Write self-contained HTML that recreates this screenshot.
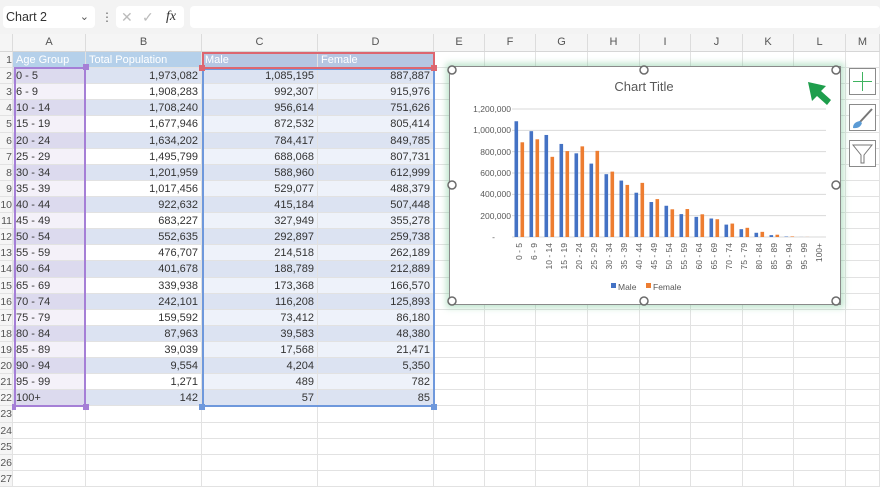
<!DOCTYPE html><html><head><style>
*{margin:0;padding:0;box-sizing:border-box}
body{width:880px;height:495px;overflow:hidden;background:#fff;font-family:"Liberation Sans",Arial,sans-serif;position:relative}
.top{position:absolute;left:0;top:0;width:880px;height:34px;background:#f3f3f3}
.box{position:absolute;background:#fff;border-radius:4px;height:22px;top:6px}
.hdr{position:absolute;top:34px;left:0;width:880px;height:18px;background:#f5f5f5;border-bottom:1px solid #d6d6d6}
.hdr div{position:absolute;top:0;height:17px;line-height:17px;text-align:center;font-size:11px;color:#555;border-right:1px solid #dcdcdc}
.rows{position:absolute;top:52px;left:0;width:880px}
.r{height:16.12px;display:flex;font-size:11px;line-height:16px;color:#333;border-bottom:1px solid #e2e2e2;position:relative}
.r>div{flex:none;border-right:1px solid #e2e2e2;overflow:hidden;white-space:nowrap;padding:0 3px}
.n{width:13px;background:#f5f5f5;color:#555;padding:0!important;text-align:right;font-size:10.5px}
.a{width:73px}.b{width:116px;text-align:right}.c{width:116px;text-align:right}.d{width:116px;text-align:right}
.e{width:51px}.f{width:51px}.g{width:52px}.h{width:52px}.i{width:51px}.j{width:52px}.k{width:51px}.l{width:52px}.m{width:34px}
.ev .a{background:#dcdaee}.ev .b,.ev .c,.ev .d{background:#dce3f2}
.od .a{background:#f4f1f9}.od .c,.od .d{background:#eef2fa}
.h1 .a,.h1 .b{background:#b5d0ea;color:#fff;font-weight:normal}.h1 .c,.h1 .d{background:#b6c6e2;color:#fff;text-align:left}
.ln{position:absolute}
</style></head><body>
<div class="top"></div>
<div class="box" style="left:3px;width:92px;font-size:12.5px;line-height:22px;color:#333;padding-left:3px">Chart 2<span style="position:absolute;right:6px;top:0;color:#555;font-size:11px">&#8964;</span></div>
<div style="position:absolute;left:101px;top:10px;color:#666;font-size:12px">&#8942;</div>
<div class="box" style="left:116px;width:68px;font-size:14px;line-height:22px;color:#bbb"><span style="position:absolute;left:5px">&#10005;</span><span style="position:absolute;left:26px">&#10003;</span><span style="position:absolute;left:50px;color:#333;font-family:'Liberation Serif',serif;font-style:italic">fx</span></div>
<div class="box" style="left:190px;width:690px"></div>
<div class="hdr">
<div style="left:0;width:13px"></div>
<div style="left:13px;width:73px">A</div><div style="left:86px;width:116px">B</div><div style="left:202px;width:116px">C</div><div style="left:318px;width:116px">D</div><div style="left:434px;width:51px">E</div><div style="left:485px;width:51px">F</div><div style="left:536px;width:52px">G</div><div style="left:588px;width:52px">H</div><div style="left:640px;width:51px">I</div><div style="left:691px;width:52px">J</div><div style="left:743px;width:51px">K</div><div style="left:794px;width:52px">L</div><div style="left:846px;width:34px">M</div>
</div>
<div class="rows">
<div class="r h1"><div class="n">1</div><div class="a">Age Group</div><div class="b" style="text-align:left">Total Population</div><div class="c">Male</div><div class="d">Female</div><div class="e"></div><div class="f"></div><div class="g"></div><div class="h"></div><div class="i"></div><div class="j"></div><div class="k"></div><div class="l"></div><div class="m"></div></div>
<div class="r ev"><div class="n">2</div><div class="a">0 - 5</div><div class="b">1,973,082</div><div class="c">1,085,195</div><div class="d">887,887</div><div class="e"></div><div class="f"></div><div class="g"></div><div class="h"></div><div class="i"></div><div class="j"></div><div class="k"></div><div class="l"></div><div class="m"></div></div>
<div class="r od"><div class="n">3</div><div class="a">6 - 9</div><div class="b">1,908,283</div><div class="c">992,307</div><div class="d">915,976</div><div class="e"></div><div class="f"></div><div class="g"></div><div class="h"></div><div class="i"></div><div class="j"></div><div class="k"></div><div class="l"></div><div class="m"></div></div>
<div class="r ev"><div class="n">4</div><div class="a">10 - 14</div><div class="b">1,708,240</div><div class="c">956,614</div><div class="d">751,626</div><div class="e"></div><div class="f"></div><div class="g"></div><div class="h"></div><div class="i"></div><div class="j"></div><div class="k"></div><div class="l"></div><div class="m"></div></div>
<div class="r od"><div class="n">5</div><div class="a">15 - 19</div><div class="b">1,677,946</div><div class="c">872,532</div><div class="d">805,414</div><div class="e"></div><div class="f"></div><div class="g"></div><div class="h"></div><div class="i"></div><div class="j"></div><div class="k"></div><div class="l"></div><div class="m"></div></div>
<div class="r ev"><div class="n">6</div><div class="a">20 - 24</div><div class="b">1,634,202</div><div class="c">784,417</div><div class="d">849,785</div><div class="e"></div><div class="f"></div><div class="g"></div><div class="h"></div><div class="i"></div><div class="j"></div><div class="k"></div><div class="l"></div><div class="m"></div></div>
<div class="r od"><div class="n">7</div><div class="a">25 - 29</div><div class="b">1,495,799</div><div class="c">688,068</div><div class="d">807,731</div><div class="e"></div><div class="f"></div><div class="g"></div><div class="h"></div><div class="i"></div><div class="j"></div><div class="k"></div><div class="l"></div><div class="m"></div></div>
<div class="r ev"><div class="n">8</div><div class="a">30 - 34</div><div class="b">1,201,959</div><div class="c">588,960</div><div class="d">612,999</div><div class="e"></div><div class="f"></div><div class="g"></div><div class="h"></div><div class="i"></div><div class="j"></div><div class="k"></div><div class="l"></div><div class="m"></div></div>
<div class="r od"><div class="n">9</div><div class="a">35 - 39</div><div class="b">1,017,456</div><div class="c">529,077</div><div class="d">488,379</div><div class="e"></div><div class="f"></div><div class="g"></div><div class="h"></div><div class="i"></div><div class="j"></div><div class="k"></div><div class="l"></div><div class="m"></div></div>
<div class="r ev"><div class="n">10</div><div class="a">40 - 44</div><div class="b">922,632</div><div class="c">415,184</div><div class="d">507,448</div><div class="e"></div><div class="f"></div><div class="g"></div><div class="h"></div><div class="i"></div><div class="j"></div><div class="k"></div><div class="l"></div><div class="m"></div></div>
<div class="r od"><div class="n">11</div><div class="a">45 - 49</div><div class="b">683,227</div><div class="c">327,949</div><div class="d">355,278</div><div class="e"></div><div class="f"></div><div class="g"></div><div class="h"></div><div class="i"></div><div class="j"></div><div class="k"></div><div class="l"></div><div class="m"></div></div>
<div class="r ev"><div class="n">12</div><div class="a">50 - 54</div><div class="b">552,635</div><div class="c">292,897</div><div class="d">259,738</div><div class="e"></div><div class="f"></div><div class="g"></div><div class="h"></div><div class="i"></div><div class="j"></div><div class="k"></div><div class="l"></div><div class="m"></div></div>
<div class="r od"><div class="n">13</div><div class="a">55 - 59</div><div class="b">476,707</div><div class="c">214,518</div><div class="d">262,189</div><div class="e"></div><div class="f"></div><div class="g"></div><div class="h"></div><div class="i"></div><div class="j"></div><div class="k"></div><div class="l"></div><div class="m"></div></div>
<div class="r ev"><div class="n">14</div><div class="a">60 - 64</div><div class="b">401,678</div><div class="c">188,789</div><div class="d">212,889</div><div class="e"></div><div class="f"></div><div class="g"></div><div class="h"></div><div class="i"></div><div class="j"></div><div class="k"></div><div class="l"></div><div class="m"></div></div>
<div class="r od"><div class="n">15</div><div class="a">65 - 69</div><div class="b">339,938</div><div class="c">173,368</div><div class="d">166,570</div><div class="e"></div><div class="f"></div><div class="g"></div><div class="h"></div><div class="i"></div><div class="j"></div><div class="k"></div><div class="l"></div><div class="m"></div></div>
<div class="r ev"><div class="n">16</div><div class="a">70 - 74</div><div class="b">242,101</div><div class="c">116,208</div><div class="d">125,893</div><div class="e"></div><div class="f"></div><div class="g"></div><div class="h"></div><div class="i"></div><div class="j"></div><div class="k"></div><div class="l"></div><div class="m"></div></div>
<div class="r od"><div class="n">17</div><div class="a">75 - 79</div><div class="b">159,592</div><div class="c">73,412</div><div class="d">86,180</div><div class="e"></div><div class="f"></div><div class="g"></div><div class="h"></div><div class="i"></div><div class="j"></div><div class="k"></div><div class="l"></div><div class="m"></div></div>
<div class="r ev"><div class="n">18</div><div class="a">80 - 84</div><div class="b">87,963</div><div class="c">39,583</div><div class="d">48,380</div><div class="e"></div><div class="f"></div><div class="g"></div><div class="h"></div><div class="i"></div><div class="j"></div><div class="k"></div><div class="l"></div><div class="m"></div></div>
<div class="r od"><div class="n">19</div><div class="a">85 - 89</div><div class="b">39,039</div><div class="c">17,568</div><div class="d">21,471</div><div class="e"></div><div class="f"></div><div class="g"></div><div class="h"></div><div class="i"></div><div class="j"></div><div class="k"></div><div class="l"></div><div class="m"></div></div>
<div class="r ev"><div class="n">20</div><div class="a">90 - 94</div><div class="b">9,554</div><div class="c">4,204</div><div class="d">5,350</div><div class="e"></div><div class="f"></div><div class="g"></div><div class="h"></div><div class="i"></div><div class="j"></div><div class="k"></div><div class="l"></div><div class="m"></div></div>
<div class="r od"><div class="n">21</div><div class="a">95 - 99</div><div class="b">1,271</div><div class="c">489</div><div class="d">782</div><div class="e"></div><div class="f"></div><div class="g"></div><div class="h"></div><div class="i"></div><div class="j"></div><div class="k"></div><div class="l"></div><div class="m"></div></div>
<div class="r ev"><div class="n">22</div><div class="a">100+</div><div class="b">142</div><div class="c">57</div><div class="d">85</div><div class="e"></div><div class="f"></div><div class="g"></div><div class="h"></div><div class="i"></div><div class="j"></div><div class="k"></div><div class="l"></div><div class="m"></div></div>
<div class="r"><div class="n">23</div><div class="a"></div><div class="b"></div><div class="c"></div><div class="d"></div><div class="e"></div><div class="f"></div><div class="g"></div><div class="h"></div><div class="i"></div><div class="j"></div><div class="k"></div><div class="l"></div><div class="m"></div></div>
<div class="r"><div class="n">24</div><div class="a"></div><div class="b"></div><div class="c"></div><div class="d"></div><div class="e"></div><div class="f"></div><div class="g"></div><div class="h"></div><div class="i"></div><div class="j"></div><div class="k"></div><div class="l"></div><div class="m"></div></div>
<div class="r"><div class="n">25</div><div class="a"></div><div class="b"></div><div class="c"></div><div class="d"></div><div class="e"></div><div class="f"></div><div class="g"></div><div class="h"></div><div class="i"></div><div class="j"></div><div class="k"></div><div class="l"></div><div class="m"></div></div>
<div class="r"><div class="n">26</div><div class="a"></div><div class="b"></div><div class="c"></div><div class="d"></div><div class="e"></div><div class="f"></div><div class="g"></div><div class="h"></div><div class="i"></div><div class="j"></div><div class="k"></div><div class="l"></div><div class="m"></div></div>
<div class="r"><div class="n">27</div><div class="a"></div><div class="b"></div><div class="c"></div><div class="d"></div><div class="e"></div><div class="f"></div><div class="g"></div><div class="h"></div><div class="i"></div><div class="j"></div><div class="k"></div><div class="l"></div><div class="m"></div></div>
</div>
<!-- selection outlines -->
<div class="ln" style="left:14px;top:67px;width:72px;height:340px;border:2px solid #a57fd6"></div>
<div class="ln" style="left:202px;top:68px;width:233px;height:339px;border:2px solid #6e98dc"></div>
<div class="ln" style="left:202px;top:52px;width:233px;height:17px;border:2px solid #dd6670"></div>
<div class="ln" style="left:83px;top:64px;width:6px;height:6px;background:#a57fd6"></div>
<div class="ln" style="left:83px;top:404px;width:6px;height:6px;background:#a57fd6"></div>
<div class="ln" style="left:12px;top:404px;width:4px;height:6px;background:#a57fd6"></div>
<div class="ln" style="left:199px;top:65px;width:6px;height:6px;background:#dd6670"></div>
<div class="ln" style="left:431px;top:65px;width:6px;height:6px;background:#dd6670"></div>
<div class="ln" style="left:199px;top:404px;width:6px;height:6px;background:#6e98dc"></div>
<div class="ln" style="left:431px;top:404px;width:6px;height:6px;background:#6e98dc"></div>
<!-- chart -->
<div class="ln" style="left:449px;top:66px;width:392px;height:239px;box-shadow:0 0 6px 3px rgba(120,200,150,.45);background:#fff;border:1px solid #8a8a8a"></div>
<svg class="ln" style="left:0;top:0" width="880" height="495" id="ch">
<g font-family="Liberation Sans,Arial,sans-serif" font-size="8.5" fill="#595959" text-anchor="end">
<text x="511" y="112">1,200,000</text><text x="511" y="133">1,000,000</text><text x="511" y="155">800,000</text><text x="511" y="176">600,000</text><text x="511" y="197">400,000</text><text x="511" y="219">200,000</text><text x="495" y="240">-</text>
</g>
<g stroke="#d9d9d9" stroke-width="1" id="grid"></g>
<text x="644" y="91" font-family="Liberation Sans,Arial,sans-serif" font-size="13" fill="#595959" text-anchor="middle">Chart Title</text>
<g id="bars"></g>
<g font-family="Liberation Sans,Arial,sans-serif" font-size="8.5" fill="#595959" text-anchor="end" id="cats">
<text transform="translate(522,243) rotate(-90)">0 - 5</text><text transform="translate(537,243) rotate(-90)">6 - 9</text><text transform="translate(552,243) rotate(-90)">10 - 14</text><text transform="translate(567,243) rotate(-90)">15 - 19</text><text transform="translate(582,243) rotate(-90)">20 - 24</text><text transform="translate(597,243) rotate(-90)">25 - 29</text><text transform="translate(612,243) rotate(-90)">30 - 34</text><text transform="translate(627,243) rotate(-90)">35 - 39</text><text transform="translate(642,243) rotate(-90)">40 - 44</text><text transform="translate(657,243) rotate(-90)">45 - 49</text><text transform="translate(672,243) rotate(-90)">50 - 54</text><text transform="translate(687,243) rotate(-90)">55 - 59</text><text transform="translate(702,243) rotate(-90)">60 - 64</text><text transform="translate(717,243) rotate(-90)">65 - 69</text><text transform="translate(732,243) rotate(-90)">70 - 74</text><text transform="translate(747,243) rotate(-90)">75 - 79</text><text transform="translate(762,243) rotate(-90)">80 - 84</text><text transform="translate(777,243) rotate(-90)">85 - 89</text><text transform="translate(792,243) rotate(-90)">90 - 94</text><text transform="translate(807,243) rotate(-90)">95 - 99</text><text transform="translate(822,243) rotate(-90)">100+</text>
</g>
<rect x="611" y="283" width="5" height="5" fill="#4472c4"/><text x="618" y="290" font-family="Liberation Sans,Arial,sans-serif" font-size="8.5" fill="#595959">Male</text>
<rect x="646" y="283" width="5" height="5" fill="#ed7d31"/><text x="653" y="290" font-family="Liberation Sans,Arial,sans-serif" font-size="8.5" fill="#595959">Female</text>
<g fill="#fff" stroke="#6b6b6b" stroke-width="1.5">
<circle cx="452" cy="70" r="4"/><circle cx="644" cy="70" r="4"/><circle cx="836" cy="70" r="4"/><circle cx="452" cy="185" r="4"/><circle cx="836" cy="185" r="4"/><circle cx="452" cy="301" r="4"/><circle cx="644" cy="301" r="4"/><circle cx="836" cy="301" r="4"/>
</g>
<path d="M808 82 L826 86 L821 91 L831 100 L827 105 L817 96 L812 101 Z" fill="#1e9e4c"/>
<g fill="#fff" stroke="#8a8a8a"><rect x="849.5" y="68.5" width="26" height="26"/><rect x="849.5" y="104.5" width="26" height="26"/><rect x="849.5" y="140.5" width="26" height="26"/></g>
<path d="M862.5 72 V91 M853 81.5 H872" stroke="#3fb35f" stroke-width="1"/>
<path d="M872 109 L860 122" stroke="#777" stroke-width="2"/><path d="M860 121 Q853 122 853 128 Q860 129 862 123 Z" fill="#5b9bd5"/>
<path d="M853 145 H872 L864 155 V163 H861 V155 Z" fill="none" stroke="#777"/>
</svg>
<script>
var M=[1085195,992307,956614,872532,784417,688068,588960,529077,415184,327949,292897,214518,188789,173368,116208,73412,39583,17568,4204,489,57];
var F=[887887,915976,751626,805414,849785,807731,612999,488379,507448,355278,259738,262189,212889,166570,125893,86180,48380,21471,5350,782,85];
var ns="http://www.w3.org/2000/svg",g=document.getElementById('grid'),b=document.getElementById('bars');
for(var k=0;k<=6;k++){var y=237-k*21.33,l=document.createElementNS(ns,'line');l.setAttribute('x1',512);l.setAttribute('x2',826);l.setAttribute('y1',y);l.setAttribute('y2',y);g.appendChild(l);}
function bar(x,v,c){var h=v/1.2e6*128,r=document.createElementNS(ns,'rect');r.setAttribute('x',x);r.setAttribute('y',237-h);r.setAttribute('width',3.6);r.setAttribute('height',h);r.setAttribute('fill',c);b.appendChild(r);}
for(var i=0;i<21;i++){var c=512+15*(i+.5);bar(c-5,M[i],'#4472c4');bar(c+1,F[i],'#ed7d31');}
</script>
</body></html>
